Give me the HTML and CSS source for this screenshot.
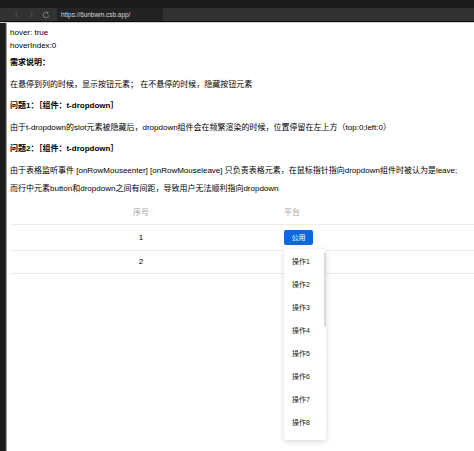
FILE: index.html
```html
<!DOCTYPE html>
<html lang="zh">
<head>
<meta charset="utf-8">
<title>t-dropdown demo</title>
<link rel="stylesheet" href="styles.css">
</head>
<body>
<div class="window">
  <div class="titlebar"></div>
  <div class="toolbar">
    <div class="nav">
      <svg class="nav-icon dim" width="6" height="7" viewBox="0 0 6 7"><path d="M4 0.8 L1.5 3.5 L4 6.2" fill="none" stroke="currentColor" stroke-width="0.9"/></svg>
      <svg class="nav-icon dim" width="6" height="7" viewBox="0 0 6 7"><path d="M2 0.8 L4.5 3.5 L2 6.2" fill="none" stroke="currentColor" stroke-width="0.9"/></svg>
      <svg class="nav-icon" width="8" height="8" viewBox="0 0 8 8"><path d="M6.6 4.3 A2.7 2.7 0 1 1 5.6 1.9" fill="none" stroke="currentColor" stroke-width="0.9"/><path d="M4.6 0.6 L6.6 1.6 L5.2 3.3 Z" fill="currentColor"/></svg>
    </div>
    <div class="url">https://6unbwm.csb.app/</div>
  </div>
  <div class="edge"></div>
  <div class="main">
    <div class="side"></div>
    <div class="page">
      <div class="line">hover: true</div>
      <div class="line">hoverIndex:0</div>
      <p class="para bold first">需求说明：</p>
      <p class="para">在悬停到列的时候，显示按钮元素； 在不悬停的时候，隐藏按钮元素</p>
      <p class="para bold">问题1：［组件：t-dropdown］</p>
      <p class="para">由于t-dropdown的slot元素被隐藏后，dropdown组件会在频繁渲染的时候，位置停留在左上方（top:0;left:0）</p>
      <p class="para bold">问题2：［组件：t-dropdown］</p>
      <p class="para">由于表格监听事件 [onRowMouseenter] [onRowMouseleave] 只负责表格元素，在鼠标指针指向dropdown组件时被认为是leave;</p>
      <p class="para tight">而行中元素button和dropdown之间有间距，导致用户无法顺利指向dropdown</p>
      <table class="table">
        <thead>
          <tr class="head-row">
            <th class="col-index">序号</th>
            <th class="col-platform">平台</th>
          </tr>
        </thead>
        <tbody>
          <tr class="row row-active">
            <td class="col-index">1</td>
            <td class="col-platform">
              <div class="btn-wrap">
                <button class="btn">公用</button>
                <div class="dropdown">
                  <ul class="menu">
                    <li>操作1</li>
                    <li>操作2</li>
                    <li>操作3</li>
                    <li>操作4</li>
                    <li>操作5</li>
                    <li>操作6</li>
                    <li>操作7</li>
                    <li>操作8</li>
                  </ul>
                  <div class="scrollbar"></div>
                </div>
              </div>
            </td>
          </tr>
          <tr class="row row-plain">
            <td class="col-index">2</td>
            <td class="col-platform"></td>
          </tr>
        </tbody>
      </table>
    </div>
  </div>
</div>
</body>
</html>
```

FILE: styles.css
```css
* { box-sizing: border-box; }
html, body { margin: 0; padding: 0; height: 100%; overflow: hidden; background: #fff; }
body {
  font-family: "Liberation Sans", "Noto Sans CJK SC", sans-serif;
  font-size: 8px;
  color: #000;
}
.window { display: flex; flex-direction: column; height: 451px; width: 474px; }
.titlebar { height: 8px; background: #1b1b1b; flex: none; }
.toolbar {
  height: 13px; flex: none; background: #323232;
  display: flex; align-items: center;
}
.nav { width: 57px; display: flex; align-items: center; padding-left: 14px; gap: 8px; color: #8c8c8c; }
.nav-icon { display: block; }
.nav-icon.dim { color: #5e5e5e; }
.url {
  width: 106px; height: 13px; background: #232323;
  color: #d8d8d8; font-size: 6.4px; line-height: 13px; padding-left: 4px;
}
.edge { height: 2px; flex: none; background: linear-gradient(#0e0e0e 50%, #cfcfcf 50%); }
.main { flex: 1; display: flex; min-height: 0; }
.side { width: 7px; flex: none; background: linear-gradient(90deg, #1a1a1a 0 5px, #3b3b3b 5px 6px, #9a9a9a 6px 7px); }
.page { flex: 1; padding: 3px 0 0 3px; min-width: 0; }
.line { line-height: 13px; height: 13px; }
.para { margin: 8.5px 0 0; line-height: 13px; height: 13px; white-space: nowrap; }
.para.first { margin-top: 4px; }
.para.tight { margin-top: 5px; }
.bold { font-weight: bold; }
.table {
  margin-top: 5.5px; border-collapse: collapse; width: 464px; table-layout: fixed;
}
.table th, .table td {
  padding: 0; border-bottom: 1px solid #ececec; vertical-align: middle; font-weight: normal;
}
.head-row th { height: 24px; color: #a6a6a6; }
.col-index { width: 262px; text-align: center; }
.col-platform { text-align: left; padding-left: 12px !important; }
.row-active td { height: 26px; }
.row-plain td { height: 23px; }
.btn-wrap { position: relative; display: inline-block; vertical-align: middle; }
.btn {
  display: block; width: 29px; height: 15px; padding: 0; border: none; border-radius: 2px;
  background: #0b69e0; color: #fff; font: inherit; font-size: 7px; line-height: 15px; text-align: center;
}
.dropdown {
  position: absolute; top: 19px; left: 0; width: 42px; height: 191px; z-index: 5;
  background: #fff; border-radius: 2px; overflow: hidden;
  box-shadow: 0 2px 6px rgba(0,0,0,0.14), 0 0 2px rgba(0,0,0,0.06);
}
.menu { list-style: none; margin: 0; padding: 1.5px 0 0; }
.menu li { height: 23px; line-height: 23px; padding-left: 8px; color: #1a1a1a; font-size: 7px; }
.scrollbar {
  position: absolute; right: 0; top: 3px; width: 2px; height: 75px; background: #dcdcdc; border-radius: 1px;
}
```
